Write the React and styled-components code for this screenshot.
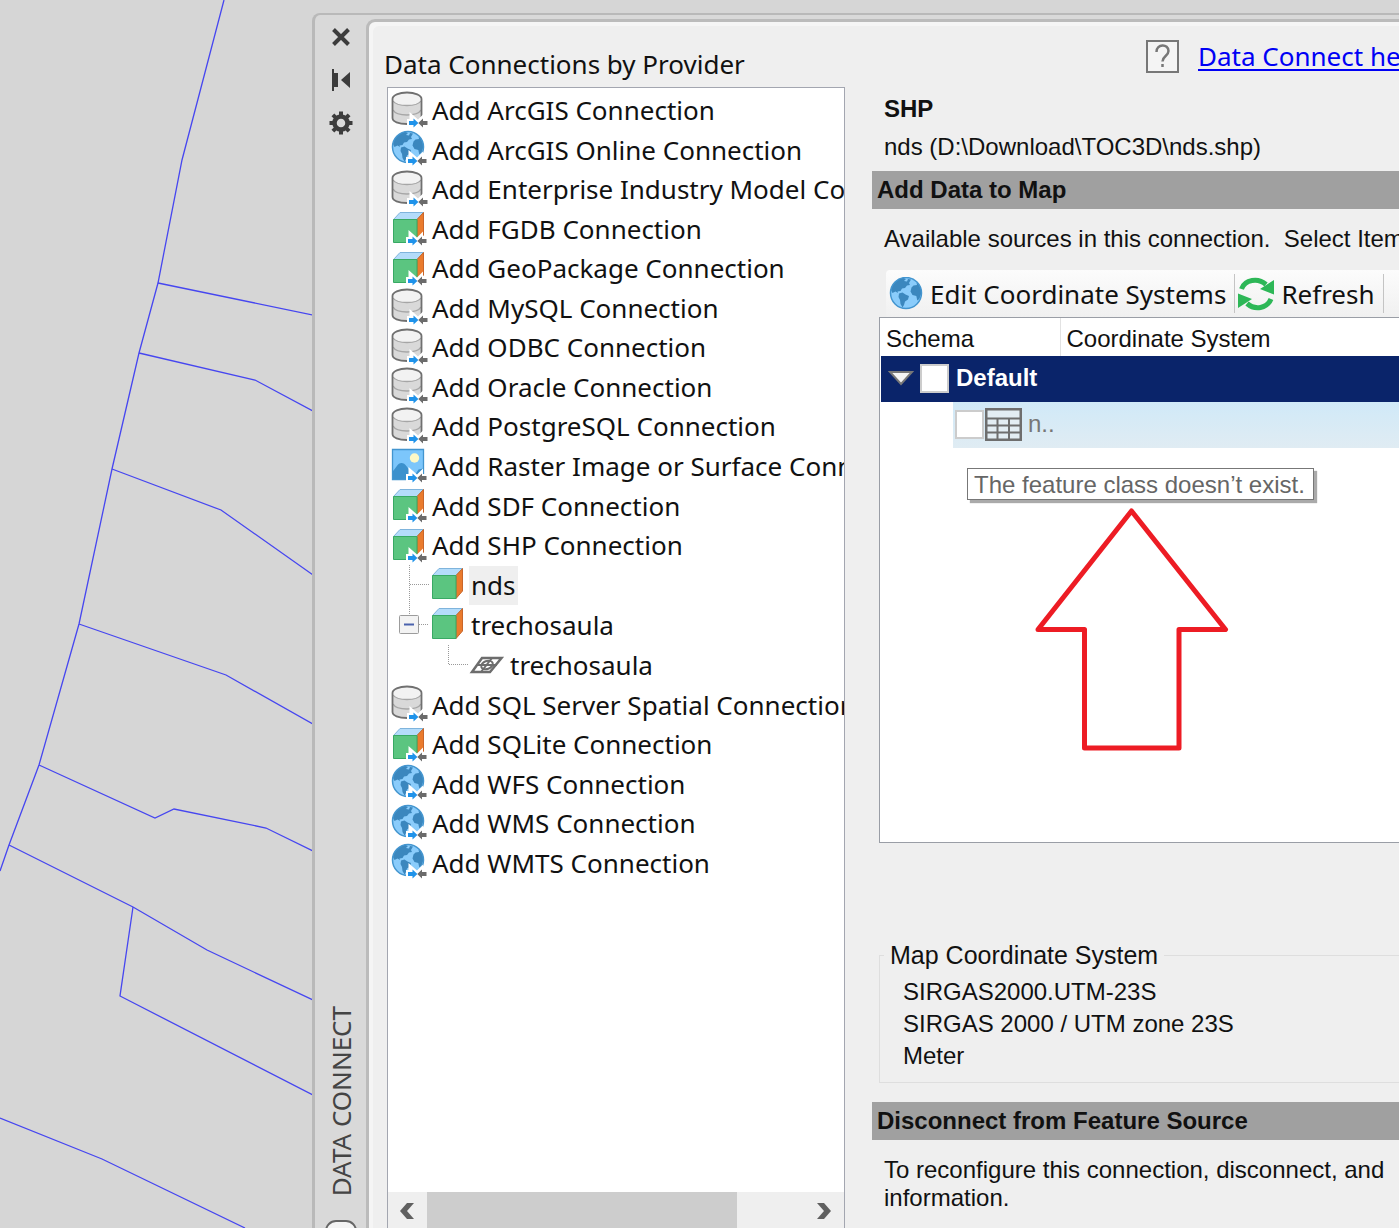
import React from 'react';
import styled, { createGlobalStyle } from 'styled-components';

const GlobalStyle = createGlobalStyle`
  * { box-sizing: border-box; }
  body { margin: 0; overflow: hidden; }
  button, input { font: inherit; margin: 0; }
  svg { flex: none; }
`;

const Screen = styled.div`
  display: flex;
  height: 100vh;
  overflow: hidden;
  background: #d6d6d6;
  color: #111;
  font-family: "Noto Sans", "Open Sans", sans-serif;
  font-size: 26px;
  white-space: nowrap;
`;
const MapLines = styled.svg`
  flex: none;
  fill: none;
  stroke: #4646f0;
  stroke-width: 1.3;
`;
const Palette = styled.section`
  display: flex;
  flex: 1;
  min-width: 0;
  margin-top: 13px;
  border: solid #b9b9b9;
  border-width: 2px 0 0 3px;
  border-radius: 8px 0 0 0;
  background: #d9d9d9;
`;
const Strip = styled.div`
  display: flex;
  flex-direction: column;
  align-items: center;
  flex: none;
  width: 51px;
  overflow: hidden;
`;
const StripButton = styled.button`
  display: flex;
  align-items: center;
  justify-content: center;
  flex: none;
  width: 40px;
  height: 43px;
  padding: 0;
  border: 0;
  background: none;
`;
const StripTitle = styled.h1`
  margin: auto 0 20px;
  font-size: 26px;
  font-weight: 400;
  line-height: 34px;
  color: #444;
  writing-mode: vertical-rl;
  transform: rotate(180deg);
`;
const StripHandle = styled.div`
  flex: none;
  height: 12px;
`;
const Body = styled.div`
  display: flex;
  flex: 1;
  min-width: 0;
  margin-top: 4px;
  border: solid #bbb;
  border-width: 3px 0 0 3px;
  border-radius: 9px 0 0 0;
  background: #efefef;
  box-shadow: inset 4px 4px 0 #f5f5f5;
  overflow: hidden;
`;
const Providers = styled.div`
  display: flex;
  flex-direction: column;
  flex: none;
  width: 458px;
  margin-left: 18px;
`;
const ProvidersTitle = styled.h2`
  margin: 0 0 0 -3px;
  padding-top: 22px;
  height: 65px;
  font-size: 26px;
  font-weight: 400;
  line-height: 40px;
`;
const TreePane = styled.div`
  display: flex;
  flex-direction: column;
  flex: 1;
  border: 1px solid #a3a6b0;
  border-bottom: 0;
  background: #fff;
  overflow: hidden;
`;
const Tree = styled.ul`
  display: grid;
  grid-template-rows: repeat(20, 1fr);
  height: 792px;
  margin: 3px 0 0;
  padding: 0 0 0 3px;
  list-style: none;
`;
const TreeItem = styled.li`
  display: flex;
  align-items: center;
  gap: 3px;
`;
const TreeIcon = styled.span`
  display: flex;
  svg { display: block; overflow: visible; }
`;
const TreeLabel = styled.span`
  padding: 0 2px;
  line-height: 39px;
  background: ${(props) => (props.$selected ? '#efefef' : 'none')};
`;
const ScrollBar = styled.div`
  display: flex;
  height: 36px;
  margin-top: auto;
  background: #efefef;
`;
const ScrollButton = styled.button`
  width: 39px;
  padding: 0;
  border: 0;
  background: none;
`;
const ScrollTrack = styled.div`
  flex: 1;
`;
const ScrollThumb = styled.div`
  width: 82%;
  height: 100%;
  background: #cdcdcd;
`;

const Details = styled.div`
  flex: 1;
  min-width: 0;
  margin-left: 27px;
  font-family: "Liberation Sans", Arial, sans-serif;
  font-size: 24px;
  overflow: hidden;
`;
const HelpRow = styled.div`
  display: flex;
  align-items: center;
  gap: 19px;
  height: 68px;
  padding-left: 274px;
  font-family: "Noto Sans", "Open Sans", sans-serif;
  font-size: 26px;
`;
const HelpLink = styled.a`
  color: #0000f5;
  text-decoration-thickness: 2px;
  text-underline-offset: 3px;
`;
const Source = styled.div`
  height: 81px;
  padding-left: 12px;
  line-height: 38px;
`;
const SectionBar = styled.h2`
  margin: 0;
  height: 38px;
  padding-left: 5px;
  background: #a0a0a0;
  font-size: 24px;
  font-weight: 700;
  line-height: 37px;
`;
const Hint = styled.p`
  margin: 0;
  padding: 16px 0 0 12px;
  height: 61px;
  line-height: 28px;
  white-space: pre;
`;
const Toolbar = styled.div`
  display: flex;
  height: 47px;
  margin-left: 14px;
  border-radius: 4px 0 0 0;
  background: linear-gradient(#fcfcfc, #f0f0f0);
  font-family: "Noto Sans", "Open Sans", sans-serif;
  font-size: 26px;
`;
const ToolButton = styled.button`
  display: flex;
  align-items: center;
  gap: ${(props) => props.$gap}px;
  flex: none;
  margin: 4px 0;
  padding: 0 8px 0 3px;
  border: 0;
  border-right: 1px solid #c4c4c4;
  background: none;
  color: inherit;
`;
const Sources = styled.div`
  position: relative;
  height: 526px;
  margin-left: 7px;
  border: 1px solid #9a9ea6;
  border-right: 0;
  background: #fff;
`;
const SourceTable = styled.table`
  width: 100%;
  border-collapse: collapse;
  table-layout: fixed;
`;
const HeadCell = styled.th`
  width: ${(props) => props.$width || 'auto'};
  height: 38px;
  padding: 3px 0 0 6px;
  font-weight: 400;
  text-align: left;

  &:first-child { border-right: 1px solid #e2e2e2; }
`;
const RowCell = styled.td`
  height: 46px;
  padding: 0 0 0 ${(props) => props.$indent}px;
`;
const RowContent = styled.label`
  display: flex;
  align-items: center;
  height: 46px;
  padding-bottom: 2px;
  color: ${(props) => (props.$group ? '#fff' : '#777')};
  background: ${(props) => (props.$group ? '#0a246a' : 'linear-gradient(#d0e9f8, #e0ecf3)')};
  font-weight: ${(props) => (props.$group ? 700 : 400)};
`;
const Expander = styled.svg`
  margin-left: 7px;
`;
const Check = styled.input`
  appearance: none;
  width: 29px;
  height: 29px;
  margin-left: ${(props) => props.$before}px;
  margin-right: ${(props) => props.$after}px;
  border: 2px solid #ccc;
  background: #fff;
`;
const RowName = styled.span`
  margin-left: 6px;
`;
const Tooltip = styled.div`
  position: absolute;
  left: 87px;
  top: 150px;
  height: 32px;
  padding: 0 8px 0 6px;
  border: 1px solid #777;
  background: #fff;
  box-shadow: 3px 3px 1px #aaa;
  color: #666;
  line-height: 31px;
`;
const Pointer = styled.svg`
  position: absolute;
  left: 153px;
  top: 188px;
`;
const CoordinateSystem = styled.fieldset`
  margin: 98px -4px 0 7px;
  padding: 7px 0 0 23px;
  height: 142px;
  border: 1px solid #dedede;
  line-height: 32px;
`;
const Legend = styled.legend`
  margin-left: -19px;
  padding: 0 6px;
  font-size: 25px;
  line-height: 28px;
`;
const Footer = styled.div`
  margin-top: 19px;
`;

function ConnectArrows({ shift }) {
  return (
    <g transform={shift ? 'translate(-1 -1)' : undefined}>
      <path d="M16 28h2.500v-7l8.500 7.500 6-6V28h3v9H16z" fill="#fff" />
      <path d="M18 30h4.500v-2.500L27.400 32l-4.900 4.500V34H18z" fill="#1f93ea" />
      <path d="M36.500 30H32v-2.500L27.300 32l4.700 4.500V34h4.500z" fill="#6b6b6b" />
    </g>
  );
}

function Database() {
  return (
    <svg width="36" height="38" viewBox="0 1 36 38">
      <path d="M1.500 8v19c0 3.500 6 6 14.500 6s14.500-2.500 14.500-6V8z" fill="#d9d9d9" />
      <path d="M2 19c2 3.500 8 5 14 5s12-1.500 14-5" fill="none" stroke="#a6a6a6" strokeWidth="1.500" />
      <ellipse cx="16" cy="8" rx="14.500" ry="6.500" fill="#f2f2f2" />
      <path d="M2 10c2 3 8 4.500 14 4.500S28 13 30 10" fill="none" stroke="#a6a6a6" strokeWidth="1.300" />
      <path d="M30.500 26V8c0-3.600-6.500-6.500-14.500-6.500S1.500 4.400 1.500 8v19c0 3.500 6 6 14.500 6" fill="none" stroke="#707070" strokeWidth="1.800" />
      <ConnectArrows />
    </svg>
  );
}

function Globe({ link }) {
  return (
    <svg width={link ? 36 : 34} height={link ? 38 : 34} viewBox={link ? '0 1 36 38' : '0 1 34 34'}>
      <circle cx="17" cy="17" r="15.500" fill="#8accfb" />
      <path d="M2 14C3 8 8 3 14 1.800l3 1.200-2 2 3 .5 1-2.500 3 .5-2 3.500 1 2-3 .5-2 2.500-3 .5-1.500 2.500-3 .5L9 17l-2.500-1.500L3.500 17z" fill="#3b87be" />
      <path d="M10 17.500l3.500-1 3 2 3.500 1.500-1 3.500-3 2-1 3.500-1.500 2.500-2-3.500-.5-4-1.500-3z" fill="#3b87be" />
      <path d="M22.500 11.500l2-2 3.500-.5-.5-2.500 2.500 2 2 5 .3 4-2 5.500-2 1.500-1-4.500-3.800-1-2-3.500z" fill="#3b87be" />
      <circle cx="17" cy="17" r="15.500" fill="none" stroke="#4395cf" strokeWidth="1.500" />
      {link && <ConnectArrows shift />}
    </svg>
  );
}

function Cube({ link }) {
  return (
    <svg width="36" height="38" viewBox="0 0 36 38" strokeLinejoin="round">
      <path d="M2.500 9.500l6.500-7h23.500l-6.500 7z" fill="#b4dcfa" stroke="#7fb4dc" />
      <path d="M26 9.500l6.500-7v22.500L26 32.500z" fill="#ea7b2d" stroke="#c9662a" />
      <path d="M2.500 9.500H26v23H2.500z" fill="#5bc580" stroke="#38a964" />
      {link && <ConnectArrows shift />}
    </svg>
  );
}

function Raster() {
  return (
    <svg width="36" height="38" viewBox="0 1 36 38">
      <path d="M1.500 2.500h31v30h-31z" fill="#7cc6fb" stroke="#4295cf" strokeWidth="1.300" />
      <path d="M2 24c3-3 4.500-8 8.500-8s6 5 9 8.500l4 4 4-6 4.500-1V32H2z" fill="#3c91cd" />
      <circle cx="23.500" cy="11" r="4.700" fill="#fdf8c6" />
      <ConnectArrows shift />
    </svg>
  );
}

function Layer() {
  return (
    <svg width="36" height="38" viewBox="0 0 36 38" fill="none" stroke="#6d6d6d">
      <path d="M13 12h19.500L21 26H3z" strokeWidth="2.500" />
      <path d="M8 19h20M23 12L12 26" strokeWidth="2" />
      <ellipse cx="18" cy="19" rx="6" ry="4" strokeWidth="2" transform="rotate(-20 18 19)" />
    </svg>
  );
}

function SubGuide({ expandable }) {
  return (
    <svg width="36" height="40" viewBox="0 0 36 40" fill="none">
      <path d={expandable ? 'M18.500 0v10M28 19.500h10' : 'M18.500 0v40M19 19.500h19'} stroke="#999" strokeDasharray="1 1" />
      {expandable && (
        <>
          <rect x="8.500" y="10.500" width="19" height="18" rx="1" fill="#f3f3f3" stroke="#9c9c9c" />
          <path d="M13 19.500h10" stroke="#4b62ad" strokeWidth="2" />
        </>
      )}
    </svg>
  );
}

function LeafGuide() {
  return (
    <svg width="75" height="40" viewBox="0 0 75 40" fill="none">
      <path d="M57.500 0v19.500H77" stroke="#999" strokeDasharray="1 1" />
    </svg>
  );
}

const providers = [
  { name: 'Add ArcGIS Connection', icon: <Database /> },
  { name: 'Add ArcGIS Online Connection', icon: <Globe link /> },
  { name: 'Add Enterprise Industry Model Connection', icon: <Database /> },
  { name: 'Add FGDB Connection', icon: <Cube link /> },
  { name: 'Add GeoPackage Connection', icon: <Cube link /> },
  { name: 'Add MySQL Connection', icon: <Database /> },
  { name: 'Add ODBC Connection', icon: <Database /> },
  { name: 'Add Oracle Connection', icon: <Database /> },
  { name: 'Add PostgreSQL Connection', icon: <Database /> },
  { name: 'Add Raster Image or Surface Connection', icon: <Raster /> },
  { name: 'Add SDF Connection', icon: <Cube link /> },
  { name: 'Add SHP Connection', icon: <Cube link /> },
  { name: 'nds', icon: <Cube />, guide: <SubGuide />, selected: true },
  { name: 'trechosaula', icon: <Cube />, guide: <SubGuide expandable /> },
  { name: 'trechosaula', icon: <Layer />, guide: <LeafGuide /> },
  { name: 'Add SQL Server Spatial Connection', icon: <Database /> },
  { name: 'Add SQLite Connection', icon: <Cube link /> },
  { name: 'Add WFS Connection', icon: <Globe link /> },
  { name: 'Add WMS Connection', icon: <Globe link /> },
  { name: 'Add WMTS Connection', icon: <Globe link /> },
];

function ProviderTree() {
  return (
    <TreePane>
      <Tree>
        {providers.map((item, i) => (
          <TreeItem key={i}>
            {item.guide && <TreeIcon>{item.guide}</TreeIcon>}
            <TreeIcon>{item.icon}</TreeIcon>
            <TreeLabel $selected={item.selected}>{item.name}</TreeLabel>
          </TreeItem>
        ))}
      </Tree>
      <ScrollBar>
        <ScrollButton aria-label="Scroll left">
          <svg width="18" height="18" viewBox="0 0 18 18"><path d="M8 1h7L8 9l7 8H8L1 9z" fill="#606060" /></svg>
        </ScrollButton>
        <ScrollTrack><ScrollThumb /></ScrollTrack>
        <ScrollButton aria-label="Scroll right">
          <svg width="18" height="18" viewBox="0 0 18 18"><path d="M8 1H1l7 8-7 8h7l7-8z" fill="#606060" /></svg>
        </ScrollButton>
      </ScrollBar>
    </TreePane>
  );
}

function SourceList() {
  return (
    <Sources>
      <SourceTable>
        <thead>
          <tr>
            <HeadCell $width="180px">Schema</HeadCell>
            <HeadCell>Coordinate System</HeadCell>
          </tr>
        </thead>
        <tbody>
          <tr>
            <RowCell colSpan={2} $indent={1}>
              <RowContent $group>
                <Expander width="26" height="16" viewBox="0 0 26 16">
                  <path d="M2 2h22L13 14z" fill="#f4f4f4" stroke="#777" strokeWidth="2" />
                </Expander>
                <Check type="checkbox" $before={6} $after={7} />
                Default
              </RowContent>
            </RowCell>
          </tr>
          <tr>
            <RowCell colSpan={2} $indent={73}>
              <RowContent>
                <Check type="checkbox" $before={2} $after={1} />
                <svg width="37" height="33" viewBox="0 0 37 33" fill="none" stroke="#6e6e6e" strokeWidth="2">
                  <path d="M1 1h35v31H1z" fill="#e3edf3" strokeWidth="3" />
                  <path d="M1 10.500h35M1 17.500h35M1 24.500h35M12.500 10v22M24 10v22" />
                </svg>
                <RowName>n..</RowName>
              </RowContent>
            </RowCell>
          </tr>
        </tbody>
      </SourceTable>
      <Tooltip role="tooltip">The feature class doesn’t exist.</Tooltip>
      <Pointer width="198" height="246" viewBox="0 0 198 246">
        <path d="M98.500 5l94 118.500H146V242H51.500V123.500H5z" fill="none" stroke="#ed1c24" strokeWidth="5" strokeLinejoin="round" />
      </Pointer>
    </Sources>
  );
}

function App() {
  return (
    <Screen>
      <GlobalStyle />
      <MapLines width="312" height="1228" viewBox="0 0 312 1228">
        <path d="M224 0L182 160 158 283 139 353 112 469 79 624 39 765 9 845 0 871" />
        <path d="M158 283L313 315M139 353L255 380 313 411M112 469L221 510 313 575M79 624L226 675 313 724" />
        <path d="M39 765L155 818 174 809 266 828 313 851M9 845L133 907 207 950 313 1000" />
        <path d="M133 907L120 996 313 1095M0 1118L102 1159 245 1228" />
      </MapLines>
      <Palette>
        <Strip>
          <StripButton aria-label="Close">
            <svg width="20" height="20" viewBox="0 0 20 20"><path d="M2.500 2.500l15 15M17.500 2.500l-15 15" stroke="#3c3c3c" strokeWidth="4" /></svg>
          </StripButton>
          <StripButton aria-label="Auto-hide">
            <svg width="20" height="24" viewBox="0 0 20 24" fill="#3c3c3c"><path d="M1 1h2v4h4v14H3v4H1zM19 4v16l-9-8z" /></svg>
          </StripButton>
          <StripButton aria-label="Properties">
            <svg width="24" height="24" viewBox="0 0 24 24" fill="none" stroke="#3c3c3c">
              <circle cx="12" cy="12" r="6.500" strokeWidth="4.500" />
              <path d="M12 .5v4M12 19.500v4M.5 12h4M19.500 12h4M3.900 3.900l2.800 2.800M17.300 17.300l2.800 2.800M3.900 20.100l2.800-2.800M17.300 6.700l2.800-2.800" strokeWidth="4" />
            </svg>
          </StripButton>
          <StripTitle>DATA CONNECT</StripTitle>
          <StripHandle>
            <svg width="34" height="34" viewBox="0 0 34 34"><rect x="2" y="5" width="30" height="26" rx="10" fill="#f4f4f4" stroke="#666" strokeWidth="2" /></svg>
          </StripHandle>
        </Strip>
        <Body>
          <Providers>
            <ProvidersTitle>Data Connections by Provider</ProvidersTitle>
            <ProviderTree />
          </Providers>
          <Details>
            <HelpRow>
              <svg width="33" height="33" viewBox="0 0 33 33" fill="none" stroke="#777" strokeWidth="2">
                <path d="M1 1h31v31H1z" fill="#f4f4f4" />
                <path d="M10.500 12c0-8.500 12-8.500 12-1 0 5-6 5-6 10.500M16.500 24v3" strokeWidth="2.500" />
              </svg>
              <HelpLink href="#help">Data Connect help</HelpLink>
            </HelpRow>
            <Source>
              <strong>SHP</strong>
              <div>nds (D:\Download\TOC3D\nds.shp)</div>
            </Source>
            <SectionBar>Add Data to Map</SectionBar>
            <Hint>Available sources in this connection.  Select Items</Hint>
            <Toolbar>
              <ToolButton $gap={7}>
                <Globe />
                Edit Coordinate Systems
              </ToolButton>
              <ToolButton $gap={6}>
                <svg width="37" height="34" viewBox="0 0 37 34">
                  <path d="M3.500 12C7 2.500 20 .5 28 7.500M33 22C29 31.500 17 33.500 9 26.500" fill="none" stroke="#2db757" strokeWidth="5" />
                  <path d="M36 3v14.500L22 12zM0 16.500L14 22 0 31z" fill="#2db757" />
                </svg>
                Refresh
              </ToolButton>
            </Toolbar>
            <SourceList />
            <CoordinateSystem>
              <Legend>Map Coordinate System</Legend>
              <div>SIRGAS2000.UTM-23S</div>
              <div>SIRGAS 2000 / UTM zone 23S</div>
              <div>Meter</div>
            </CoordinateSystem>
            <Footer>
              <SectionBar>Disconnect from Feature Source</SectionBar>
              <Hint>{'To reconfigure this connection, disconnect, and\ninformation.'}</Hint>
            </Footer>
          </Details>
        </Body>
      </Palette>
    </Screen>
  );
}

export default App;
